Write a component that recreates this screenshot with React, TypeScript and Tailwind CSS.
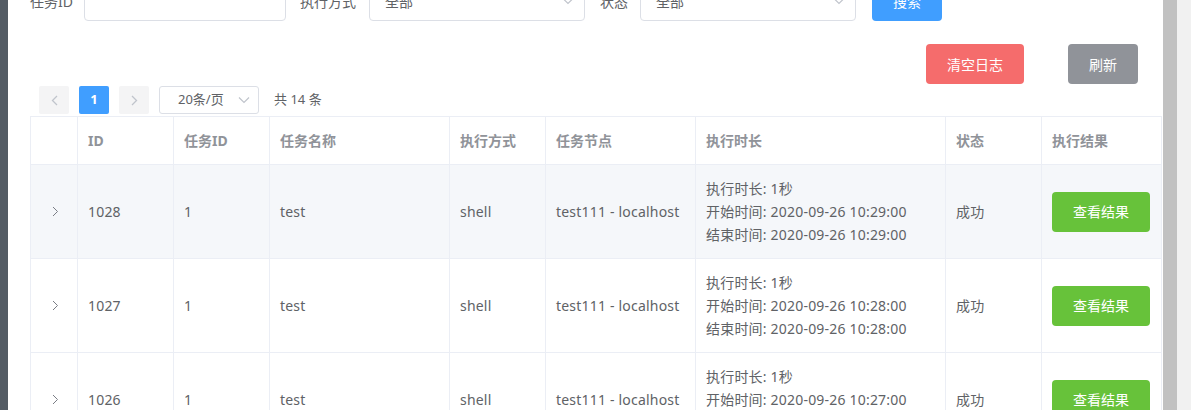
import React from "react";

const font = { fontFamily: '"Noto Sans", "Noto Sans CJK SC", sans-serif' };

function ChevronDown({ className = "" }: { className?: string }) {
  return (
    <svg className={className} width="12" height="8" viewBox="0 0 12 8" fill="none">
      <path d="M1 1.5 L6 6.5 L11 1.5" stroke="#c0c4cc" strokeWidth="1.2" />
    </svg>
  );
}

function ChevronRight({ color = "#606266", w = 7, h = 11, sw = 1.1 }: { color?: string; w?: number; h?: number; sw?: number }) {
  return (
    <svg width={w} height={h} viewBox="0 0 7 11" fill="none">
      <path d="M1 1 L5.5 5.5 L1 10" stroke={color} strokeWidth={sw} />
    </svg>
  );
}

function ChevronLeft({ color = "#c0c4cc" }: { color?: string }) {
  return (
    <svg width="7" height="11" viewBox="0 0 7 11" fill="none">
      <path d="M6 1 L1.5 5.5 L6 10" stroke={color} strokeWidth="1.3" />
    </svg>
  );
}

const rows = [
  { id: "1028", min: "29", bg: "bg-[#f5f7fa]" },
  { id: "1027", min: "28", bg: "bg-white" },
  { id: "1026", min: "27", bg: "bg-white" },
];

const cols = [47, 96, 96, 180, 96, 150, 250, 96, 120];
const headers = ["", "ID", "任务ID", "任务名称", "执行方式", "任务节点", "执行时长", "状态", "执行结果"];

export default function App() {
  return (
    <div className="flex w-[1191px] h-[410px] overflow-hidden bg-white text-[14px] text-[#606266]" style={font}>
      <div className="w-[8px] shrink-0 bg-[#545c64]" />
      <div className="w-[1155px] shrink-0 flex flex-col pl-[22px] pr-[2px]">
        {/* search form */}
        <div className="flex items-center mt-[-19px] h-[40px]">
          <span className="w-[54px] shrink-0">任务ID</span>
          <div className="w-[202px] h-[40px] border border-[#dcdfe6] rounded-[4px] shrink-0" />
          <span className="ml-[14px] w-[69px] shrink-0">执行方式</span>
          <div className="w-[216px] h-[40px] border border-[#dcdfe6] rounded-[4px] flex items-center justify-between pl-[15px] pr-[10px] shrink-0">
            <span>全部</span>
            <ChevronDown />
          </div>
          <span className="ml-[15px] w-[40px] shrink-0">状态</span>
          <div className="w-[216px] h-[40px] border border-[#dcdfe6] rounded-[4px] flex items-center justify-between pl-[15px] pr-[10px] shrink-0">
            <span>全部</span>
            <ChevronDown />
          </div>
          <button className="ml-[16px] w-[70px] h-[40px] rounded-[4px] bg-[#409eff] text-white shrink-0">搜索</button>
        </div>
        {/* action buttons */}
        <div className="flex justify-end mt-[23px] pr-[23px] gap-[44px]">
          <button className="w-[98px] h-[40px] rounded-[4px] bg-[#f56c6c] text-white">清空日志</button>
          <button className="w-[70px] h-[40px] rounded-[4px] bg-[#909399] text-white">刷新</button>
        </div>
        {/* pagination */}
        <div className="flex items-center mt-[2px] h-[28px] pl-[9px] text-[13px]">
          <div className="w-[30px] h-[28px] rounded-[2px] bg-[#f4f4f5] flex items-center justify-center">
            <ChevronLeft />
          </div>
          <div className="ml-[10px] w-[30px] h-[28px] rounded-[2px] bg-[#409eff] text-white font-bold flex items-center justify-center">1</div>
          <div className="ml-[10px] w-[30px] h-[28px] rounded-[2px] bg-[#f4f4f5] flex items-center justify-center">
            <ChevronRight color="#c0c4cc" sw={1.3} />
          </div>
          <div className="ml-[10px] w-[100px] h-[28px] border border-[#dcdfe6] rounded-[3px] flex items-center justify-between pl-[18px] pr-[8px]">
            <span>20条/页</span>
            <ChevronDown />
          </div>
          <span className="ml-[15px]">共 14 条</span>
        </div>
        {/* table */}
        <table className="mt-[2px] border-collapse table-fixed w-[1131px] border-t border-l border-[#ebeef5]">
          <colgroup>
            {cols.map((w, i) => (
              <col key={i} style={{ width: w }} />
            ))}
          </colgroup>
          <thead>
            <tr className="h-[48px]">
              {headers.map((h, i) => (
                <th key={i} className="border-r border-b border-[#ebeef5] text-left font-bold text-[#909399] px-[10px]">
                  {h}
                </th>
              ))}
            </tr>
          </thead>
          <tbody className="tracking-[0.2px]">
            {rows.map((r) => (
              <tr key={r.id} className={`h-[94px] ${r.bg}`}>
                <td className="border-r border-b border-[#ebeef5]">
                  <div className="flex justify-center pl-[2px]">
                    <ChevronRight color="#7a7d85" sw={1} />
                  </div>
                </td>
                <td className="border-r border-b border-[#ebeef5] px-[10px]">{r.id}</td>
                <td className="border-r border-b border-[#ebeef5] px-[10px]">1</td>
                <td className="border-r border-b border-[#ebeef5] px-[10px]">test</td>
                <td className="border-r border-b border-[#ebeef5] px-[10px]">shell</td>
                <td className="border-r border-b border-[#ebeef5] px-[10px]">test111 - localhost</td>
                <td className="border-r border-b border-[#ebeef5] px-[10px] leading-[23px]">
                  <div>执行时长: 1秒</div>
                  <div>开始时间: 2020-09-26 10:{r.min}:00</div>
                  <div>结束时间: 2020-09-26 10:{r.min}:00</div>
                </td>
                <td className="border-r border-b border-[#ebeef5] px-[10px]">成功</td>
                <td className="border-r border-b border-[#ebeef5] pl-[10px] pr-0">
                  <button className="w-[98px] h-[40px] rounded-[4px] bg-[#67c23a] text-white tracking-normal">查看结果</button>
                </td>
              </tr>
            ))}
          </tbody>
        </table>
      </div>
      <div className="w-[14px] shrink-0 bg-[#c1c1c1]" />
      <div className="w-[14px] shrink-0 bg-[#f1f1f1]" />
    </div>
  );
}
